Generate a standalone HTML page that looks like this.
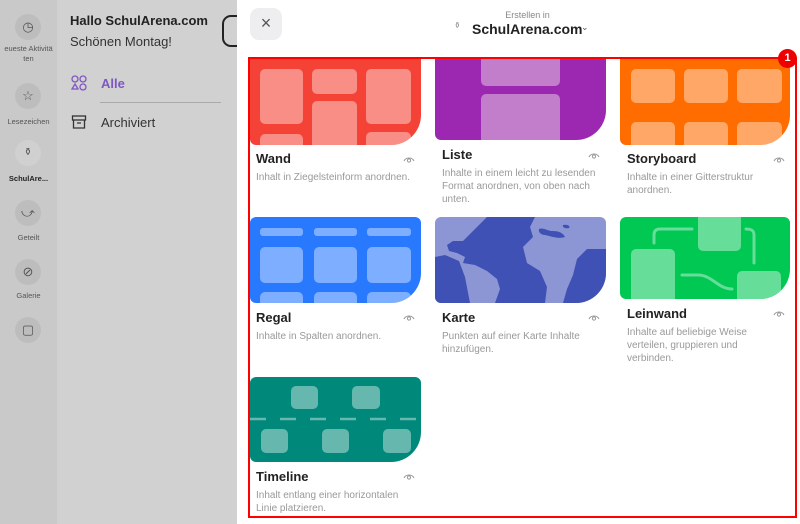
<!DOCTYPE html><html><head><meta charset="utf-8"><style>
*{margin:0;padding:0;box-sizing:border-box}
body{width:800px;height:524px;overflow:hidden;position:relative;font-family:"Liberation Sans",sans-serif;background:#d1d1d1}
.abs{position:absolute}
.side{left:0;top:0;width:57px;height:524px;background:#c9c9c9}
.ic{position:absolute;left:15px;width:26px;height:26px;border-radius:50%;background:#bdbdbd;color:#555;font-size:13px;text-align:center;line-height:26px}
.lb{position:absolute;left:0;width:57px;text-align:center;font-size:7.5px;color:#555;line-height:10px}
.modal{left:237px;top:0;width:563px;height:524px;background:#fff}
.img{position:absolute;overflow:hidden;border-radius:6px 6px 30px 6px}
.t{position:absolute;background:rgba(255,255,255,.4);border-radius:5px}
.ti{position:absolute;font-size:13px;font-weight:bold;color:#222}
.de{position:absolute;font-size:10px;color:#999;line-height:13px;width:162px}
.eye{position:absolute;width:12px;height:8px}
</style></head><body>
<div class="abs side">
<div class="ic" style="top:14px">◷</div><div class="lb" style="top:44px">eueste Aktivitä<br>ten</div>
<div class="ic" style="top:83px">☆</div><div class="lb" style="top:117px">Lesezeichen</div>
<div class="ic" style="top:140px;background:#d0d0d0;font-size:10px">⚱</div><div class="lb" style="top:174px;font-weight:bold;color:#222">SchulAre...</div>
<div class="ic" style="top:200px">⤻</div><div class="lb" style="top:233px">Geteilt</div>
<div class="ic" style="top:259px">⊘</div><div class="lb" style="top:291px">Galerie</div>
<div class="ic" style="top:317px">▢</div>
</div>
<div class="abs" style="left:70px;top:13px;font-size:13px;font-weight:bold;color:#222">Hallo SchulArena.com</div>
<div class="abs" style="left:70px;top:34px;font-size:13px;color:#333">Schönen Montag!</div>
<div class="abs" style="left:222px;top:15px;width:30px;height:32px;border:2px solid #222;border-radius:9px"></div>
<svg class="abs" style="left:71px;top:75px" width="16" height="16" viewBox="0 0 16 16" fill="none" stroke="#7e57c2" stroke-width="1.3"><circle cx="4" cy="4" r="3"/><circle cx="12" cy="4" r="3"/><circle cx="12" cy="12" r="3"/><path d="M4 9l3 5H1z"/></svg>
<div class="abs" style="left:101px;top:76px;font-size:13px;font-weight:bold;color:#7e57c2">Alle</div>
<div class="abs" style="left:100px;top:102px;width:121px;height:1px;background:#aaa"></div>
<svg class="abs" style="left:71px;top:114px" width="16" height="16" viewBox="0 0 16 16" fill="none" stroke="#333" stroke-width="1.3"><rect x="1.5" y="2" width="13" height="4"/><path d="M2.5 6v8h11V6M6 9h4"/></svg>
<div class="abs" style="left:101px;top:115px;font-size:13px;color:#333">Archiviert</div>

<div class="abs modal"></div>
<div class="abs" style="left:250px;top:8px;width:32px;height:32px;border-radius:9px;background:#eeeef0;text-align:center;line-height:31px;font-size:18px;color:#555">×</div>
<div class="abs" style="left:440px;top:10px;width:175px;text-align:center;font-size:9px;color:#888">Erstellen in</div>
<div class="abs" style="left:454px;top:21px;font-size:8px;color:#888">⚱</div>
<div class="abs" style="left:472px;top:21px;font-size:14px;font-weight:bold;color:#222">SchulArena.com</div>
<div class="abs" style="left:581px;top:22px;font-size:9px;color:#555">⌄</div>

<div class="img" style="left:250px;top:59px;width:171px;height:86px;background:#f44336;border-top-left-radius:0;border-top-right-radius:0">
<div class="t" style="left:10px;top:10px;width:43px;height:55px"></div><div class="t" style="left:62px;top:10px;width:45px;height:25px"></div><div class="t" style="left:116px;top:10px;width:45px;height:55px"></div><div class="t" style="left:62px;top:42px;width:45px;height:60px"></div><div class="t" style="left:10px;top:75px;width:43px;height:30px"></div><div class="t" style="left:116px;top:73px;width:45px;height:30px"></div></div>
<div class="ti" style="left:256px;top:151px">Wand</div>
<div class="de" style="left:256px;top:171px">Inhalt in Ziegelsteinform anordnen.</div>

<div class="img" style="left:435px;top:59px;width:171px;height:81px;background:#9c27b0;border-top-left-radius:0;border-top-right-radius:0">
<div class="t" style="left:46px;top:-5px;width:79px;height:32px;background:#c27ecb"></div><div class="t" style="left:46px;top:35px;width:79px;height:55px;background:#c27ecb"></div></div>
<div class="ti" style="left:442px;top:147px">Liste</div>
<div class="de" style="left:442px;top:167px">Inhalte in einem leicht zu lesenden Format anordnen, von oben nach unten.</div>

<div class="img" style="left:620px;top:59px;width:170px;height:86px;background:#ff6d00;border-top-left-radius:0;border-top-right-radius:0">
<div class="t" style="left:11px;top:10px;width:44px;height:34px"></div><div class="t" style="left:64px;top:10px;width:44px;height:34px"></div><div class="t" style="left:117px;top:10px;width:45px;height:34px"></div>
<div class="t" style="left:11px;top:63px;width:44px;height:34px"></div><div class="t" style="left:64px;top:63px;width:44px;height:34px"></div><div class="t" style="left:117px;top:63px;width:45px;height:34px"></div></div>
<div class="ti" style="left:627px;top:151px">Storyboard</div>
<div class="de" style="left:627px;top:171px">Inhalte in einer Gitterstruktur anordnen.</div>

<div class="img" style="left:250px;top:217px;width:171px;height:86px;background:#2979ff">
<div class="t" style="left:10px;top:11px;width:43px;height:8px;border-radius:3px"></div><div class="t" style="left:64px;top:11px;width:43px;height:8px;border-radius:3px"></div><div class="t" style="left:117px;top:11px;width:44px;height:8px;border-radius:3px"></div>
<div class="t" style="left:10px;top:30px;width:43px;height:36px"></div><div class="t" style="left:64px;top:30px;width:43px;height:36px"></div><div class="t" style="left:117px;top:30px;width:44px;height:36px"></div>
<div class="t" style="left:10px;top:75px;width:43px;height:20px"></div><div class="t" style="left:64px;top:75px;width:43px;height:20px"></div><div class="t" style="left:117px;top:75px;width:44px;height:20px"></div></div>
<div class="ti" style="left:256px;top:310px">Regal</div>
<div class="de" style="left:256px;top:330px">Inhalte in Spalten anordnen.</div>

<div class="img" style="left:435px;top:217px;width:171px;height:86px;background:#8c96d4">
<svg width="171" height="86" viewBox="0 0 171 86"><path fill="#3f51b5" d="M52 0H100L95 10 98 20 88 30 92 46 105 54 112 70 110 86H60L65 72 62 62 52 54 40 48 28 46 30 40 22 36 14 34 12 28 18 24 28 24 40 12Z"/><path fill="#3f51b5" d="M0 40L10 38 24 44 30 60 35 86H0Z"/><path fill="#3f51b5" d="M152 32L142 42 138 58 132 72 128 86H171V42 160 32Z"/><path fill="#3f51b5" d="M104 12C108 10 112 14 118 14 124 14 128 16 130 20 124 22 118 20 110 18 106 18 103 15 104 12ZM128 8C132 7 136 9 134 11 130 12 127 10 128 8Z"/></svg></div>
<div class="ti" style="left:442px;top:310px">Karte</div>
<div class="de" style="left:442px;top:330px">Punkten auf einer Karte Inhalte hinzufügen.</div>

<div class="img" style="left:620px;top:217px;width:170px;height:82px;background:#00c853">
<div class="t" style="left:78px;top:-5px;width:43px;height:39px;background:#66dd98"></div><div class="t" style="left:11px;top:32px;width:44px;height:60px;background:#66dd98"></div><div class="t" style="left:117px;top:54px;width:44px;height:40px;background:#66dd98"></div>
<svg class="abs" style="left:0;top:0" width="170" height="82" fill="none" stroke="#66dd98" stroke-width="3" stroke-linecap="round"><path d="M34 26V18C34 14 36 12 40 12H72M126 12C132 12 134 14 134 18V46M62 58H78C92 58 98 72 112 72"/></svg></div>
<div class="ti" style="left:627px;top:306px">Leinwand</div>
<div class="de" style="left:627px;top:326px;width:140px">Inhalte auf beliebige Weise verteilen, gruppieren und verbinden.</div>

<div class="img" style="left:250px;top:377px;width:171px;height:85px;background:#00897b">
<div class="t" style="left:41px;top:9px;width:27px;height:23px"></div><div class="t" style="left:102px;top:9px;width:28px;height:23px"></div>
<svg class="abs" style="left:0;top:0" width="171" height="85"><path d="M0 42H171" stroke="#66b8af" stroke-width="2.5" stroke-dasharray="16 14"/></svg>
<div class="t" style="left:11px;top:52px;width:27px;height:24px"></div><div class="t" style="left:72px;top:52px;width:27px;height:24px"></div><div class="t" style="left:133px;top:52px;width:28px;height:24px"></div></div>
<div class="ti" style="left:256px;top:469px">Timeline</div>
<div class="de" style="left:256px;top:489px">Inhalt entlang einer horizontalen Linie platzieren.</div>

<svg class="eye" style="left:403px;top:155px" viewBox="0 0 12 8" fill="none" stroke="#999"><path d="M1 6C3 2 9 2 11 6"/><circle cx="6" cy="5.5" r="1.6"/></svg>
<svg class="eye" style="left:588px;top:151px" viewBox="0 0 12 8" fill="none" stroke="#999"><path d="M1 6C3 2 9 2 11 6"/><circle cx="6" cy="5.5" r="1.6"/></svg>
<svg class="eye" style="left:773px;top:155px" viewBox="0 0 12 8" fill="none" stroke="#999"><path d="M1 6C3 2 9 2 11 6"/><circle cx="6" cy="5.5" r="1.6"/></svg>
<svg class="eye" style="left:403px;top:313px" viewBox="0 0 12 8" fill="none" stroke="#999"><path d="M1 6C3 2 9 2 11 6"/><circle cx="6" cy="5.5" r="1.6"/></svg>
<svg class="eye" style="left:588px;top:313px" viewBox="0 0 12 8" fill="none" stroke="#999"><path d="M1 6C3 2 9 2 11 6"/><circle cx="6" cy="5.5" r="1.6"/></svg>
<svg class="eye" style="left:773px;top:309px" viewBox="0 0 12 8" fill="none" stroke="#999"><path d="M1 6C3 2 9 2 11 6"/><circle cx="6" cy="5.5" r="1.6"/></svg>
<svg class="eye" style="left:403px;top:472px" viewBox="0 0 12 8" fill="none" stroke="#999"><path d="M1 6C3 2 9 2 11 6"/><circle cx="6" cy="5.5" r="1.6"/></svg>

<div class="abs" style="left:248px;top:57px;width:549px;height:461px;border:2px solid #f00"></div>
<div class="abs" style="left:778px;top:49px;width:19px;height:19px;border-radius:50%;background:#e00;color:#fff;font-size:11px;font-weight:bold;text-align:center;line-height:19px">1</div>
</body></html>
